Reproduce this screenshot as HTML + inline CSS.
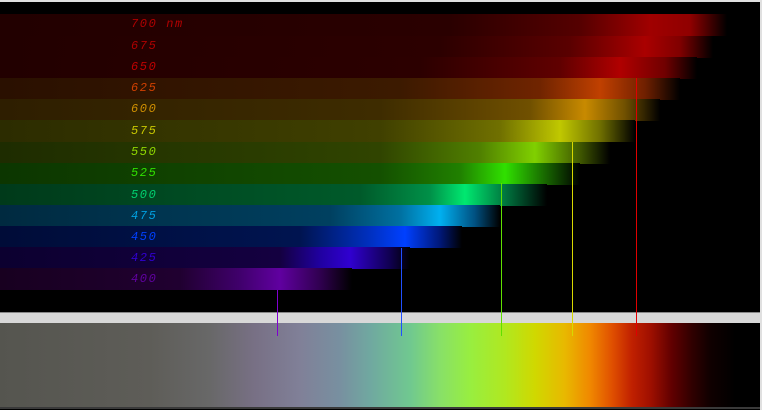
<!DOCTYPE html>
<html><head><style>
html,body{margin:0;padding:0;background:#d8d8d8;}
#w{position:relative;width:762px;height:410px;background:#000;overflow:hidden;}
.t{position:absolute;left:0;top:0;width:762px;height:2px;background:#e0e0e0;}
.r{position:absolute;right:0;top:0;width:2px;height:410px;background:#e0e0e0;}
.b{position:absolute;left:0;height:22px;}
.l{position:absolute;left:131px;font:italic 12px "Liberation Mono",monospace;letter-spacing:1.6px;}
.v{position:absolute;width:1px;}
</style></head><body><div id="w">
<div class="t"></div>
<div class="b" style="top:14px;width:727px;background:linear-gradient(90deg,#220000 0,#2a0000 450px,#550000 580px,#a00000 650px,#900000 690px,#000 727px)"></div>
<div class="b" style="top:36px;width:713px;background:linear-gradient(90deg,#220000 0,#2c0000 440px,#5a0000 570px,#aa0000 645px,#800000 680px,#000 713px)"></div>
<div class="b" style="top:57px;width:697px;background:linear-gradient(90deg,#220000 0,#2c0000 420px,#600000 560px,#b00000 620px,#700000 665px,#000 697px)"></div>
<div class="b" style="top:78px;width:680px;background:linear-gradient(90deg,#2a1000 0,#3c1a00 400px,#702400 540px,#c04000 600px,#702000 645px,#000 680px)"></div>
<div class="b" style="top:99px;width:660px;background:linear-gradient(90deg,#2e1e00 0,#3e2c00 380px,#705000 530px,#c88a00 585px,#705000 625px,#000 660px)"></div>
<div class="b" style="top:120px;width:635px;background:linear-gradient(90deg,#2c2c00 0,#404000 380px,#707000 500px,#c0c800 560px,#707000 600px,#000 635px)"></div>
<div class="b" style="top:142px;width:610px;background:linear-gradient(90deg,#1e2c00 0,#304400 380px,#508000 480px,#80d000 535px,#405800 580px,#000 610px)"></div>
<div class="b" style="top:163px;width:580px;background:linear-gradient(90deg,#0c3600 0,#145000 380px,#208000 460px,#30e000 505px,#186800 545px,#000 580px)"></div>
<div class="b" style="top:184px;width:547px;background:linear-gradient(90deg,#003a1a 0,#005a2a 360px,#009048 430px,#00e870 465px,#006838 510px,#000 547px)"></div>
<div class="b" style="top:205px;width:500px;background:linear-gradient(90deg,#002a40 0,#004060 330px,#0070a0 400px,#00b0f0 440px,#005080 475px,#000 500px)"></div>
<div class="b" style="top:226px;width:462px;background:linear-gradient(90deg,#000c38 0,#001450 300px,#0030c0 370px,#0040ff 405px,#001878 440px,#000 462px)"></div>
<div class="b" style="top:247px;width:410px;background:linear-gradient(90deg,#0c0030 0,#140040 280px,#2000a0 320px,#3000d0 350px,#100050 390px,#000 410px)"></div>
<div class="b" style="top:268px;width:352px;background:linear-gradient(90deg,#180020 0,#200030 180px,#40006c 240px,#6000a0 280px,#300050 320px,#000 352px)"></div>
<div class="l" style="top:17px;color:#b00000">700 nm</div>
<div class="l" style="top:39px;color:#b00000">675</div>
<div class="l" style="top:60px;color:#c00000">650</div>
<div class="l" style="top:81px;color:#d04000">625</div>
<div class="l" style="top:102px;color:#d09000">600</div>
<div class="l" style="top:124px;color:#c8c800">575</div>
<div class="l" style="top:145px;color:#90d800">550</div>
<div class="l" style="top:166px;color:#30e000">525</div>
<div class="l" style="top:188px;color:#00d070">500</div>
<div class="l" style="top:209px;color:#00a0e0">475</div>
<div class="l" style="top:230px;color:#0040ff">450</div>
<div class="l" style="top:251px;color:#3000d0">425</div>
<div class="l" style="top:272px;color:#6000a0">400</div>
<div style="position:absolute;left:0;top:312px;width:762px;height:11px;background:#d8d8d8;border-top:1px solid #888;"></div>
<div style="position:absolute;left:0;top:323px;width:762px;height:84px;background:linear-gradient(90deg,#55554f 0,#5e5d58 150px,#686868 210px,#787085 255px,#808098 300px,#7890a0 340px,#70a8a0 370px,#70c890 410px,#88e068 440px,#98ee40 470px,#b0e820 505px,#d0d800 535px,#e8b800 565px,#f08800 590px,#e05000 612px,#c02000 632px,#a01000 650px,#600000 672px,#300000 692px,#100000 710px,#000 735px)"></div>
<div style="position:absolute;left:0;top:407px;width:762px;height:2px;background:#3a3a3a"></div>
<div class="v" style="left:277px;top:290px;height:46px;background:#8000d0"></div>
<div class="v" style="left:401px;top:248px;height:88px;background:#2050ff"></div>
<div class="v" style="left:501px;top:183px;height:153px;background:#60e000"></div>
<div class="v" style="left:572px;top:142px;height:194px;background:#d8d800"></div>
<div class="v" style="left:636px;top:78px;height:258px;background:#e00000"></div>
<div class="r"></div>
</div></body></html>
